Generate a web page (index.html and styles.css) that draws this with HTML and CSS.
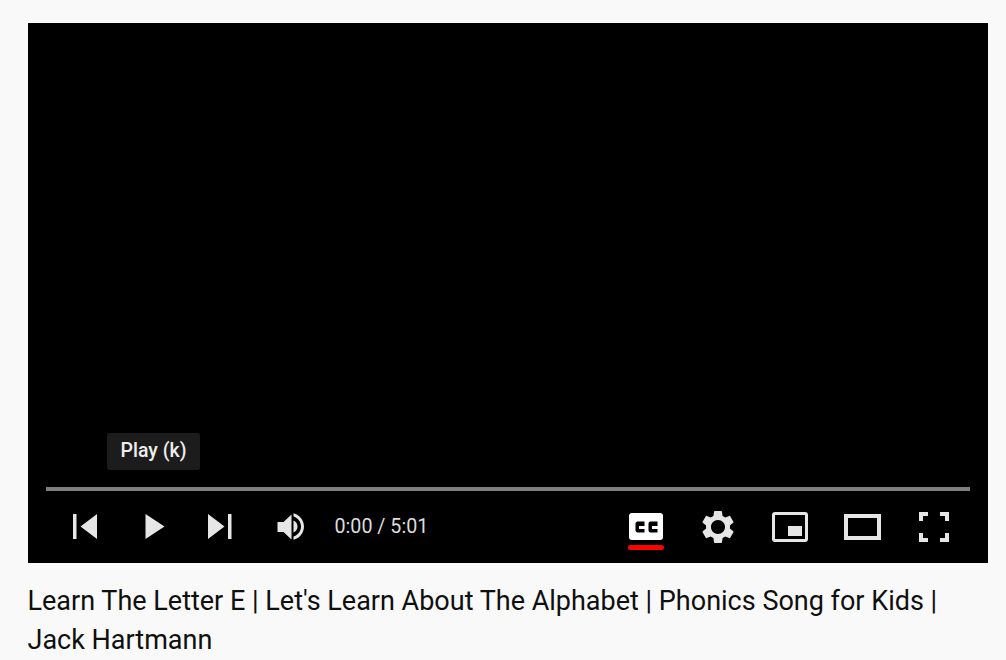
FILE: index.html
```html
<!DOCTYPE html>
<html lang="en">
<head>
<meta charset="utf-8">
<title>Learn The Letter E</title>
<link rel="stylesheet" href="styles.css">
</head>
<body>
<main class="page">
  <section class="player">
    <div class="screen"><div class="tooltip">Play (k)</div></div>
    <div class="chrome">
      <div class="progress"></div>
      <div class="controls">
        <div class="left">
          <button class="btn"><svg viewBox="0 -10 67.500 72"><path d="M22 13h3.500v25H22zM29.500 25.500 46 13v25z"/></svg></button>
          <button class="btn"><svg viewBox="0 -10 67.500 72"><path d="M26.500 13 45.500 25.500 26.500 38z"/></svg></button>
          <button class="btn"><svg viewBox="0 -10 67.500 72"><path d="M22 13v25l16.500-12.500zM42 13h3.500v25H42z"/></svg></button>
          <button class="btn"><svg viewBox="0 -10 67.500 72"><path d="M23.500 31h6l8 7.500v-25l-8 7.500h-6zM39.500 19.500v12c2.400-1 4-3.300 4-6s-1.600-5-4-6zM39.500 15.500c4.300 1.300 7.500 5.300 7.500 10s-3.200 8.700-7.500 10v3.300c6-1.400 10.500-6.900 10.500-13.300S45.500 13.600 39.500 12.200z"/></svg></button>
          <span class="time">0:00 / 5:01</span>
        </div>
        <div class="right">
          <button class="btn wide cc"><svg viewBox="0 -10 72 72"><path fill-rule="evenodd" d="M22 12h28a3 3 0 0 1 3 3v21a3 3 0 0 1-3 3H22a3 3 0 0 1-3-3V15a3 3 0 0 1 3-3zM27 20.500l-1.500 1.500v8l1.500 1.500h7.500v-3.500h-5.500v-3h5.500v-4.500zM40 20.500l-1.500 1.500v8l1.500 1.500h7.500v-3.500h-5.500v-3h5.500v-4.500z"/></svg><span class="cc-bar"></span></button>
          <button class="btn wide"><svg viewBox="0 0 36 36"><path d="m23.940 18.780c.03-.25.05-.51.05-.78s-.02-.52-.05-.78l1.680-1.320c.15-.12.19-.33.09-.51l-1.600-2.760c-.09-.17-.31-.24-.48-.17l-1.990.8c-.41-.32-.86-.58-1.350-.78l-.30-2.120c-.02-.19-.19-.33-.39-.33h-3.200c-.2 0-.36.14-.39.33l-.30 2.120c-.48.2-.93.47-1.350.78l-1.990-.8c-.18-.07-.39 0-.48.17l-1.600 2.760c-.10.17-.05.39.09.51l1.680 1.320c-.03.25-.05.52-.05.78s.02.52.05.78l-1.680 1.320c-.15.12-.19.33-.09.51l1.600 2.760c.09.17.31.24.48.17l1.990-.8c.41.32.86.58 1.350.78l.30 2.120c.02.19.19.33.39.33h3.200c.2 0 .36-.14.39-.33l.30-2.120c.48-.2.93-.47 1.350-.78l1.990.8c.18.07.39 0 .48-.17l1.600-2.760c.09-.17.05-.39-.09-.51zM18 21.500c-1.930 0-3.500-1.570-3.500-3.500s1.570-3.500 3.500-3.500 3.500 1.570 3.500 3.500-1.570 3.500-3.500 3.500z"/></svg></button>
          <button class="btn wide"><svg viewBox="0 -10 72 72"><path fill-rule="evenodd" d="M21 11h30a3 3 0 0 1 3 3v24a3 3 0 0 1-3 3H21a3 3 0 0 1-3-3V14a3 3 0 0 1 3-3zM21 14v24h30V14zM34 25h14v10H34z"/></svg></button>
          <button class="btn wide"><svg viewBox="0 -10 72 72"><path fill-rule="evenodd" d="M18 13h37v26H18zM22 17v18h29V17z"/></svg></button>
          <button class="btn wide"><svg viewBox="0 -10 72 72"><path d="M21 11h9v4h-5v5h-4zM42 11h9v9h-4v-5h-5zM21 32h4v5h5v4h-9zM47 32h4v9h-9v-4h5z"/></svg></button>
        </div>
      </div>
    </div>
  </section>
  <h1 class="title">Learn The Letter E | Let's Learn About The Alphabet | Phonics Song for Kids | Jack Hartmann</h1>
</main>
</body>
</html>
```

FILE: styles.css
```css
* { box-sizing: border-box; }

html, body {
  margin: 0;
  height: 100%;
  overflow: hidden;
  background: #f9f9f9;
}

.page {
  padding: 23px 18px 0 28px;
}

.player {
  width: 960px;
  height: 540px;
  background: #000;
  display: flex;
  flex-direction: column;
}

.screen {
  flex: 1;
  display: flex;
  align-items: flex-end;
  padding: 0 0 17px 79px;
}

.tooltip {
  width: 93px;
  height: 37px;
  background: #1c1c1c;
  color: #eee;
  border-radius: 3px;
  font: 500 19.500px/36px Roboto, sans-serif;
  text-align: center;
}

.chrome {
  padding: 0 18px;
}

.progress {
  height: 4px;
  background: #7f7f7f;
}

.controls {
  height: 72px;
  display: flex;
  justify-content: space-between;
}

.left, .right {
  display: flex;
  align-items: stretch;
}

.left {
  padding-left: 5px;
}

.btn {
  position: relative;
  width: 67.500px;
  height: 72px;
  padding: 0;
  border: 0;
  background: none;
  fill: #e6e6e6;
}

.btn svg {
  display: block;
  width: 100%;
  height: 100%;
}

.wide {
  width: 72px;
}

.cc svg {
  fill: #fff;
}

.cc-bar {
  position: absolute;
  left: 18px;
  bottom: 13px;
  width: 36px;
  height: 5px;
  border-radius: 3px;
  background: #f00;
}

.time {
  align-self: center;
  margin-left: 13.500px;
  color: #ddd;
  font: 400 19.700px/1 Roboto, sans-serif;
}

.title {
  margin: 19px 0 0 -0.500px;
  color: #0f0f0f;
  font: 400 27px/39px Roboto, sans-serif;
}
```
